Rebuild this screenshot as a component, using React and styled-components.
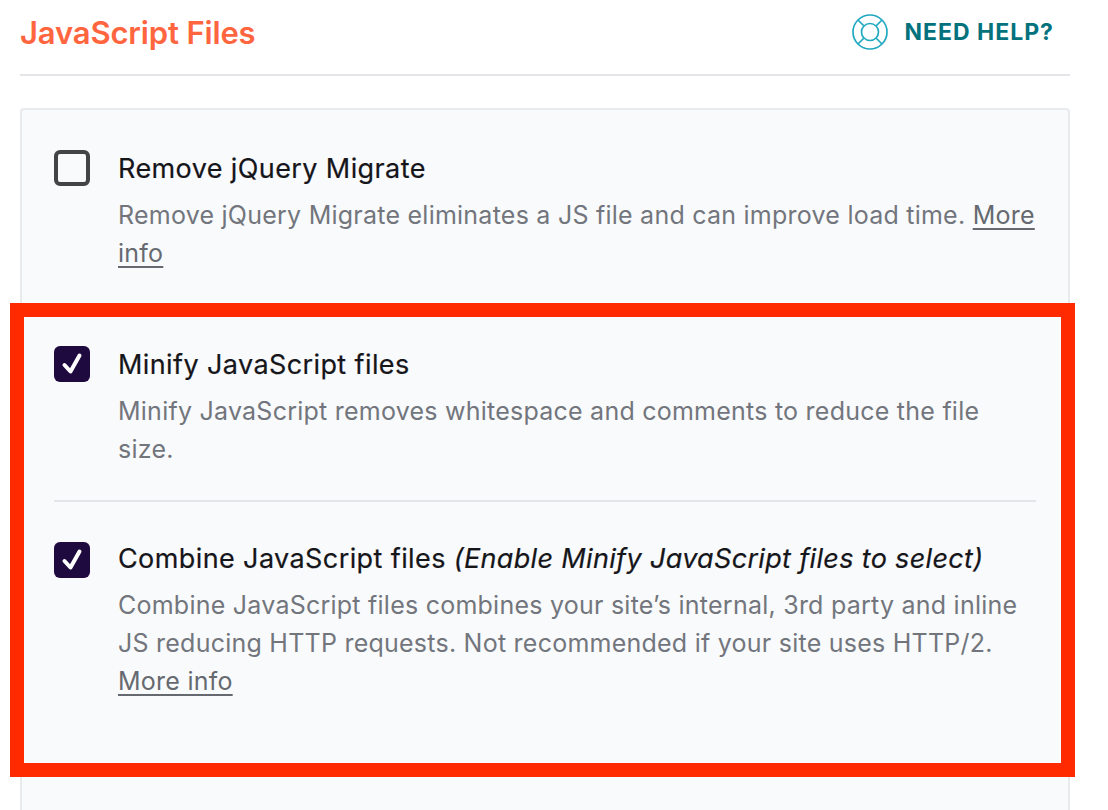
import React from 'react';
import styled, { createGlobalStyle } from 'styled-components';

const GlobalStyle = createGlobalStyle`
  html, body {
    margin: 0;
    padding: 0;
    background: #fff;
    overflow: hidden;
    font-family: Inter, "Liberation Sans", sans-serif;
  }
`;

const Page = styled.div`
  position: relative;
  width: 1108px;
  height: 810px;
  overflow: hidden;
  padding: 0 38px 0 20px;
  box-sizing: border-box;
`;

// --- header --- //
const Header = styled.header`
  display: flex;
  align-items: center;
  justify-content: space-between;
  height: 64px;
  padding: 0 16px 10px 0;
  border-bottom: 2px solid #e3e5e9;
`;

const Title = styled.h2`
  margin: 0;
  font-size: 31px;
  font-weight: 600;
  color: #ff6640;
  letter-spacing: -0.15px;
`;

const HelpLink = styled.a`
  display: flex;
  align-items: center;
  gap: 17px;
  font-size: 23px;
  font-weight: 700;
  letter-spacing: 1px;
  color: #04727d;
`;

// --- panel --- //
const Panel = styled.section`
  margin-top: 32px;
  height: 720px;
  padding: 0 32px;
  background: #f9fafc;
  border: 2px solid #e8eaee;
  border-radius: 4px;
`;

const Option = styled.div`
  display: flex;
  gap: 28px;
  padding: ${p => p.$top}px 0 ${p => p.$bottom}px;
  border-bottom: ${p => (p.$divided ? '2px solid #e3e5e9' : 'none')};
`;

const Check = styled.span`
  flex: none;
  display: block;
  width: 36px;
  height: 36px;
  margin-top: ${p => p.$offset || 0}px;
  box-sizing: border-box;
  border-radius: 6px;
  background: ${p => (p.$checked ? '#1f0a40' : 'transparent')};
  border: ${p => (p.$checked ? 'none' : '4px solid #444')};
`;

const Label = styled.div`
  font-size: 27px;
  line-height: 38px;
  font-weight: 400;
  letter-spacing: 0.4px;
  color: #15151a;
  -webkit-text-stroke: 0.2px #15151a;
  em {
    font-style: italic;
    letter-spacing: 0.33px;
  }
`;

const Description = styled.p`
  margin: 8px 0 0;
  font-size: 25px;
  line-height: 38px;
  letter-spacing: 0.24px;
  color: #72767c;
  a {
    color: #666a70;
    text-decoration: underline;
    text-underline-offset: 4px;
  }
`;

// annotation drawn over the screenshot
const Highlight = styled.div`
  position: absolute;
  left: 10px;
  top: 303px;
  width: 1065px;
  height: 474px;
  box-sizing: border-box;
  border: 14px solid #ff2a00;
  pointer-events: none;
`;

const LifeRing = () => (
  <svg width="36" height="36" viewBox="0 0 36 36" fill="none" stroke="#22a9c0" strokeWidth="1.7">
    <circle cx="18" cy="18" r="17" />
    <circle cx="18" cy="18" r="8.5" />
    <path d="M6 6l6 6M30 6l-6 6M6 30l6-6M30 30l-6-6" />
  </svg>
);

const Tick = () => (
  <svg width="36" height="36" viewBox="0 0 36 36" fill="none" stroke="#fff" strokeWidth="4" strokeLinecap="round" strokeLinejoin="round">
    <path d="M10.5 19L16.5 25.5L25.5 9.5" />
  </svg>
);

export default function App() {
  return (
    <Page>
      <GlobalStyle />
      <Header>
        <Title>JavaScript Files</Title>
        <HelpLink><LifeRing />NEED HELP?</HelpLink>
      </Header>
      <Panel>
        <Option $top={40} $bottom={31}>
          <Check />
          <div>
            <Label>Remove jQuery Migrate</Label>
            <Description>Remove jQuery Migrate eliminates a JS file and can improve load time. <a>More info</a></Description>
          </div>
        </Option>
        <Option $top={43} $bottom={32} $divided>
          <Check $checked><Tick /></Check>
          <div>
            <Label>Minify JavaScript files</Label>
            <Description>Minify JavaScript removes whitespace and comments to reduce the file size.</Description>
          </div>
        </Option>
        <Option $top={38} $bottom={32}>
          <Check $checked $offset={2}><Tick /></Check>
          <div>
            <Label>Combine JavaScript files <em>(Enable Minify JavaScript files to select)</em></Label>
            <Description>Combine JavaScript files combines your site’s internal, 3rd party and inline JS reducing HTTP requests. Not recommended if your site uses HTTP/2. <a>More info</a></Description>
          </div>
        </Option>
      </Panel>
      <Highlight />
    </Page>
  );
}
